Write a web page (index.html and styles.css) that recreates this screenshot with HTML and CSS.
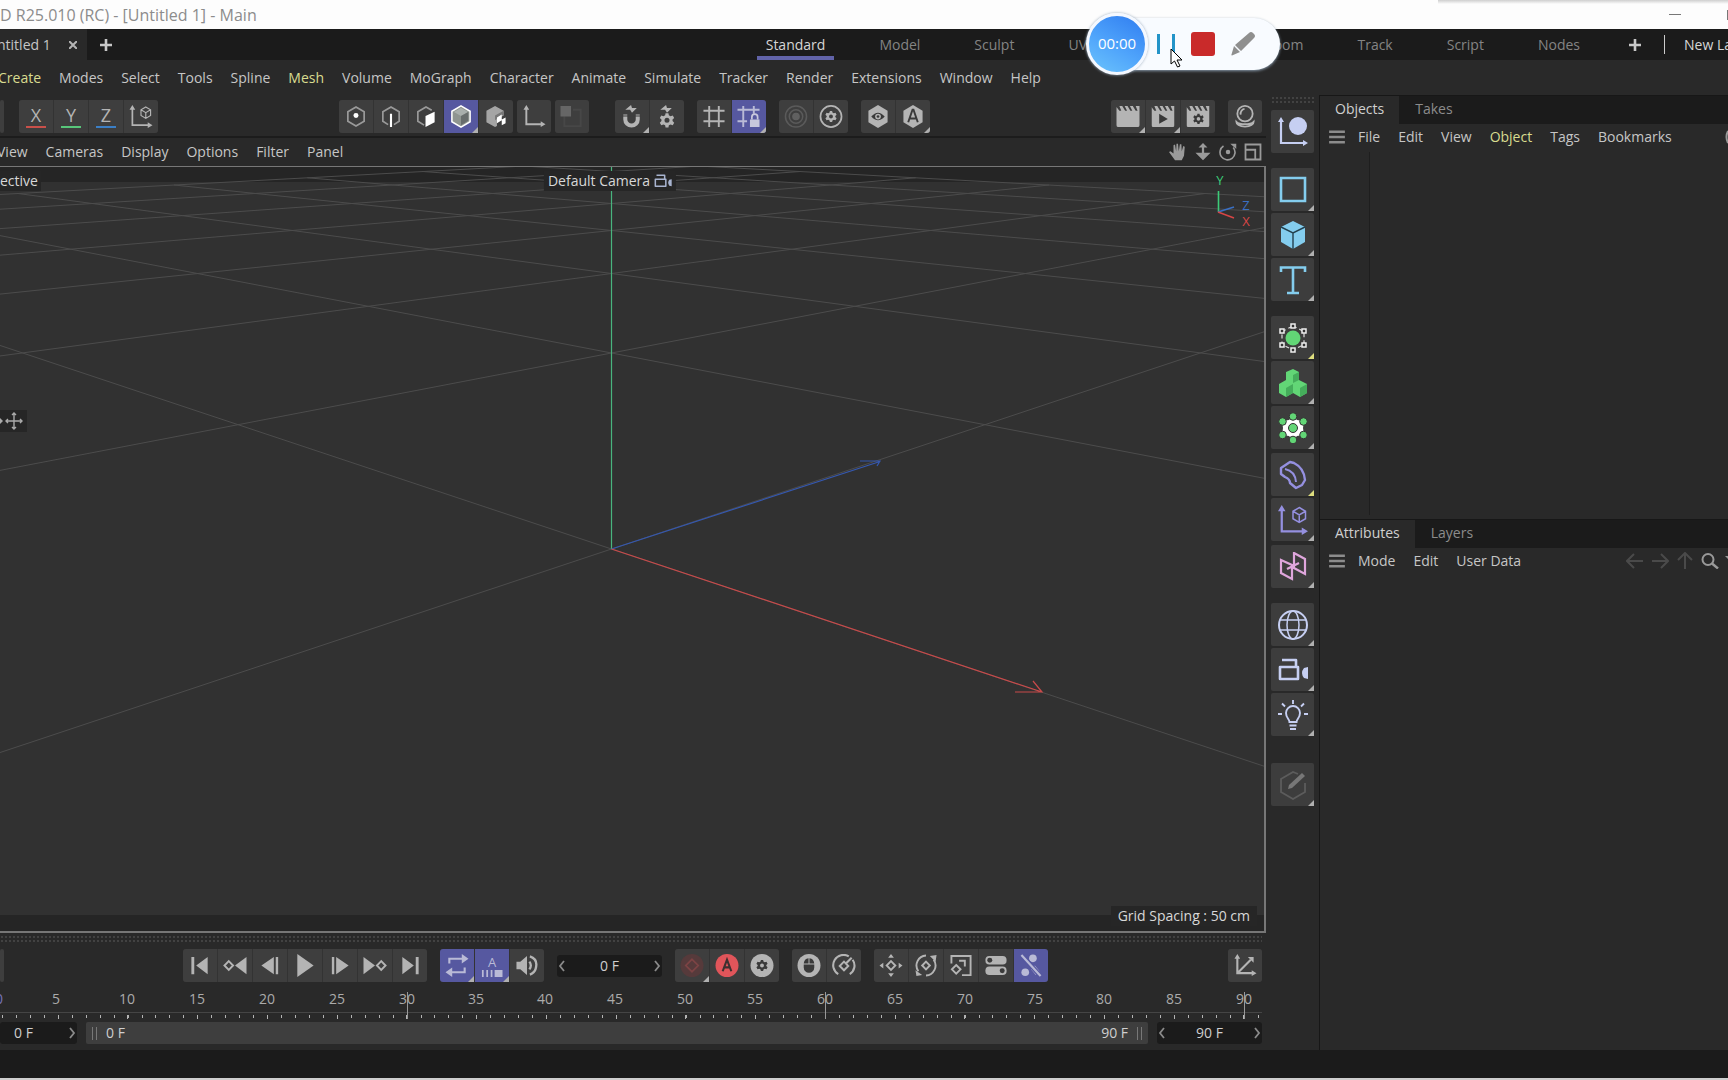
FILE: index.html
```html
<!DOCTYPE html>
<html lang="en">
<head>
<meta charset="utf-8">
<title>R25.010 (RC) - [Untitled 1] - Main</title>
<link rel="stylesheet" href="styles.css">
</head>
<body>
<svg class="defs" aria-hidden="true">
  <defs>
    <symbol id="axis" viewBox="0 0 24 24"><path d="M4 3v17h17" fill="none" stroke="currentColor" stroke-width="2"/><path d="M4 0l3 5H1zM24 20l-5 3v-6z" fill="currentColor"/></symbol>
    <symbol id="axis-cube" viewBox="0 0 24 24"><path d="M3 3v18h18" fill="none" stroke="currentColor" stroke-width="1.800"/><path d="M3 0l3 5H0zM24 21l-5 3v-6z" fill="currentColor"/><path d="M17 2l5 3v6l-5 3-5-3V5zM12 5l5 3 5-3M17 8v6" fill="none" stroke="currentColor" stroke-width="1.200"/></symbol>
    <symbol id="hex-dot" viewBox="0 0 24 24"><path d="M12 2l8.500 5v10L12 22l-8.500-5V7z" fill="none" stroke="#999" stroke-width="1.8"/><circle cx="12" cy="11" r="2.600" fill="#fff"/></symbol>
    <symbol id="hex-edge" viewBox="0 0 24 24"><path d="M9 20.500L3.500 17V7L12 2l8.500 5v10L15 20.500" fill="none" stroke="#999" stroke-width="1.8"/><path d="M12 9v14" stroke="#fff" stroke-width="2.200"/></symbol>
    <symbol id="hex-face" viewBox="0 0 24 24"><path d="M10 21l-6.500-4V7L12 2l6 3.500" fill="none" stroke="#999" stroke-width="1.8"/><path d="M11.500 11.500L21 7v11l-9.500 5z" fill="#fff"/></symbol>
    <symbol id="hex-model" viewBox="0 0 24 24"><path d="M12 1l9.500 5.500v11L12 23l-9.500-5.500v-11z" fill="#8f9590" stroke="#fff" stroke-width="1.600"/><path d="M12 3l7.500 4.200-7.500 4.300-7.500-4.300z" fill="#a9afac"/><path d="M12 11.500l7.500-4.300v9.300L12 21z" fill="#686d6c"/></symbol>
    <symbol id="hex-tex" viewBox="0 0 24 24"><path d="M11 1l9 5v5l-7 4v7l-2 1-9-5V6z" fill="#a5a5a5"/><path d="M11 11l9-5v4l-9 6z" fill="#777"/><path d="M13 13l5-3v5l4-2v6l-4 2v-5l-5 3z" fill="#fff"/></symbol>
    <symbol id="plane" viewBox="0 0 24 24"><path d="M4 9v13h17V5h-8" fill="none" stroke="#474747" stroke-width="2"/><path d="M0 1h11v11H0z" fill="#666"/></symbol>
    <symbol id="magnet" viewBox="0 0 24 24"><path d="M5 10v5a6.500 6.500 0 0013 0v-5" fill="none" stroke="currentColor" stroke-width="4.200"/><path d="M2 11.500h8M13 11.500h8" stroke="#3d3d3d" stroke-width="1.200"/><path d="M11 0L5 5h5l2 3 5-5h-5z" fill="currentColor"/></symbol>
    <symbol id="gear" viewBox="0 0 24 24"><path fill="currentColor" fill-rule="evenodd" d="M10 2h4l.600 3 2.300 1.300L20 5.200l2 3.500L19.700 11v2l2.300 2.300-2 3.500-3.100-1.100-2.300 1.300-.600 3h-4l-.600-3-2.300-1.300L4 18.800l-2-3.500L4.300 13v-2L2 8.700l2-3.500 3.100 1.100L9.400 5zM12 8.500a3.500 3.500 0 100 7 3.500 3.500 0 000-7z"/></symbol>
    <symbol id="snap-gear" viewBox="0 0 24 24"><path d="M11 0L5 5h5l2 3 5-5h-5z" fill="currentColor"/><use href="#gear" x="3" y="7" width="18" height="18"/></symbol>
    <symbol id="grid" viewBox="0 0 24 24"><path d="M7 1v22M17 1v22M1 6h22M1 17h22" fill="none" stroke="currentColor" stroke-width="2"/></symbol>
    <symbol id="grid-lock" viewBox="0 0 24 24"><path d="M6 1v22M17 1v8M0 5h23M0 17h10" fill="none" stroke="currentColor" stroke-width="2"/><path d="M13 15h10v8H13z" fill="#c8c8dc"/><path d="M15 15v-2.500a3 3 0 016 0V15" fill="none" stroke="#c8c8dc" stroke-width="1.800"/></symbol>
    <symbol id="rings" viewBox="0 0 24 24"><g fill="none" stroke="#5a5a5a" stroke-width="1.600"><circle cx="12" cy="12" r="11"/><circle cx="12" cy="12" r="7"/></g><circle cx="12" cy="12" r="4" fill="#606060"/></symbol>
    <symbol id="ring-gear" viewBox="0 0 24 24"><circle cx="12" cy="12" r="11" fill="none" stroke="currentColor" stroke-width="1.800"/><use href="#gear" x="5" y="5" width="14" height="14"/></symbol>
    <symbol id="hex-eye" viewBox="0 0 24 24"><path d="M12 0l10 6v12l-10 6-10-6V6z" fill="currentColor"/><path d="M5 12q7-8 14 0q-7 8-14 0z" fill="#3a3a3a"/><circle cx="12" cy="12" r="3" fill="currentColor"/><circle cx="12" cy="12" r="1.400" fill="#3a3a3a"/></symbol>
    <symbol id="hex-a" viewBox="0 0 24 24"><path d="M12 0l10 6v12l-10 6-10-6V6z" fill="currentColor"/><path d="M7 18l4.500-13h1L17 18M8.500 14h7" fill="none" stroke="#3a3a3a" stroke-width="2"/></symbol>
    <symbol id="clap" viewBox="0 0 24 24"><path d="M0 2l3 4h2L3 1h3l3 5h2L8.500 1h3l3 5h2L14 1h3l3 5h2l-2-5h4v20a2 2 0 01-2 2H2a2 2 0 01-2-2z" fill="currentColor"/></symbol>
    <symbol id="clap-play" viewBox="0 0 24 24"><use href="#clap" width="24" height="24"/><path d="M8 9l9 5.500-9 5z" fill="#383838"/></symbol>
    <symbol id="clap-gear" viewBox="0 0 24 24"><use href="#clap" width="24" height="24"/><use href="#gear" x="6" y="8" width="13" height="13" color="#383838"/></symbol>
    <symbol id="ball" viewBox="0 0 24 24"><g fill="none" stroke="currentColor" stroke-width="1.900"><circle cx="12" cy="9" r="8"/><path d="M7.500 10a5 5 0 014-6"/><path d="M3 17.500c0 2.500 3 5 9 5s9-2.500 9-5c-2 2-5 2.500-9 2.500s-7-.500-9-2.500z"/></g></symbol>
    <symbol id="hand" viewBox="0 0 24 24"><path d="M8 23L0 12l2-1 4 3V3l2-1 1.500 9L10 1h2l1 10 1.500-9.500h2L17 11l2-7 2 1-1 12-3 6z" fill="currentColor"/></symbol>
    <symbol id="dolly" viewBox="0 0 24 24"><path d="M12 0l6 6h-4.500v7H22L12 23 2 13h8.500V6H6z" fill="currentColor"/></symbol>
    <symbol id="orbit" viewBox="0 0 24 24"><path d="M6 4a10 10 0 1013 2" fill="none" stroke="currentColor" stroke-width="2.200"/><path d="M15 1h8v7z" fill="currentColor"/><circle cx="12" cy="12" r="3" fill="currentColor"/></symbol>
    <symbol id="maxi" viewBox="0 0 24 24"><path d="M2 2h20v20H2zM2 9h13v13" fill="none" stroke="currentColor" stroke-width="2.400"/></symbol>
    <symbol id="camera" viewBox="0 0 30 24"><path d="M4 2h14v6M2 9h18v12H2z" fill="none" stroke="currentColor" stroke-width="2.600" stroke-linejoin="round"/><path d="M30 9v12l-4-1q-4-5 0-10z" fill="currentColor"/></symbol>
    <symbol id="sphere-axis" viewBox="0 0 30 30"><path d="M3 4v22h23" fill="none" stroke="currentColor" stroke-width="2.200"/><path d="M3 0l3 5H0zM30 26l-5 3v-6z" fill="currentColor"/><circle cx="20" cy="9" r="9" fill="currentColor"/></symbol>
    <symbol id="rect" viewBox="0 0 30 30"><path d="M3 3h24v23H3z" fill="none" stroke="currentColor" stroke-width="2.600"/></symbol>
    <symbol id="cube" viewBox="0 0 30 30"><path d="M15 1l12 6v15l-12 7-12-7V7z" fill="currentColor"/><path d="M3 7l12 6 12-6M15 13v16" fill="none" stroke="#23414f" stroke-width="1.400"/></symbol>
    <symbol id="text-t" viewBox="0 0 30 30"><path d="M3 7V2.500h24V7M15 2.500v25M9 28h12" fill="none" stroke="currentColor" stroke-width="2.600"/></symbol>
    <symbol id="subdiv" viewBox="0 0 30 30"><path d="M15 3l11 5.500v13L15 27 4 21.500v-13z" fill="none" stroke="#ddd" stroke-width="1.200" stroke-dasharray="4 3"/><circle cx="15" cy="15" r="7.500" fill="currentColor"/><g fill="#333" stroke="#eee" stroke-width="1.500"><path d="M13 1h4v4h-4zM13 25h4v4h-4zM2 6h4v4H2zM24 6h4v4h-4zM2 20h4v4H2zM24 20h4v4h-4z"/></g></symbol>
    <symbol id="cloner" viewBox="0 0 30 30"><path d="M15 1l6 3v8l8 4v9l-7 4-7-4-7 4-7-4v-9l7-4V4z" fill="currentColor"/><path d="M15 7l6-3v8l-6 3zM8 20l7-4v9l-7 4zM22 20l7-4v9l-7 4z" fill="#45ad5b"/></symbol>
    <symbol id="effector" viewBox="0 0 30 30"><path d="M15 3l4 4 7 1-1 7 1 7-7 1-4 4-4-4-7-1 1-7-1-7 7-1z" fill="#fff"/><g fill="currentColor" stroke="#333"><circle cx="15" cy="3.500" r="3.800"/><circle cx="15" cy="27" r="3.800"/><circle cx="4.500" cy="8.500" r="3.800"/><circle cx="25.500" cy="8.500" r="3.800"/><circle cx="4.500" cy="22" r="3.800"/><circle cx="25.500" cy="22" r="3.800"/><circle cx="15" cy="15" r="4.500"/></g></symbol>
    <symbol id="deform" viewBox="0 0 30 30"><path d="M3 8L12 2l4 1q10 5 11 17l-3 5-6 3-6-5q0-4-5-6l-4-3z" fill="none" stroke="currentColor" stroke-width="2.400" stroke-linejoin="round"/><path d="M7 9q10 2 11 13" fill="none" stroke="currentColor" stroke-width="2"/></symbol>
    <symbol id="sym" viewBox="0 0 30 30"><path d="M3 8l11 5v14L3 21zM16 1l11 6v15l-11-6zM9 17l12-6" fill="none" stroke="currentColor" stroke-width="2.200"/></symbol>
    <symbol id="globe" viewBox="0 0 30 30"><g fill="none" stroke="currentColor" stroke-width="2"><circle cx="15" cy="15" r="14"/><ellipse cx="15" cy="15" rx="6" ry="14" stroke-width="1.500"/><path d="M2 10h26M2 20h26" stroke-width="1.500"/></g></symbol>
    <symbol id="bulb" viewBox="0 0 30 30"><path d="M11.500 22c0-3-3.500-4-3.500-9a7 7 0 0114 0c0 5-3.500 6-3.500 9zM11.500 25.500h7M12 29h6M15 0v4M0 14h4M26 14h4M4 3.500l3 3M26 3.500l-3 3" fill="none" stroke="currentColor" stroke-width="1.900"/></symbol>
    <symbol id="edit-hex" viewBox="0 0 30 30"><path d="M20 4l-5-2L3 9v13l12 7 12-7v-9" fill="none" stroke="currentColor" stroke-width="1.800"/><path d="M10 19l1-4L24 3l3 3-13 12z" fill="#777"/></symbol>
    <symbol id="p-start" viewBox="0 0 24 24"><path d="M3 3h3v18H3zM20 3v18L8 12z" fill="currentColor"/></symbol>
    <symbol id="p-prevkey" viewBox="0 0 24 24"><path d="M24 3v18L12 12z" fill="currentColor"/><path d="M5.500 7.500L10 12l-4.500 4.500L1 12z" fill="none" stroke="currentColor" stroke-width="2"/></symbol>
    <symbol id="p-prev" viewBox="0 0 24 24"><path d="M16 3v18L3 12zM18 3h2.500v18H18z" fill="currentColor"/></symbol>
    <symbol id="p-play" viewBox="0 0 24 24"><path d="M4 0l17 12L4 24z" fill="currentColor"/></symbol>
    <symbol id="loop" viewBox="0 0 24 24"><path d="M4 10V5h14M20 14v5H6" fill="none" stroke="currentColor" stroke-width="2.200"/><path d="M17 0l7 5-7 5zM7 14v10l-7-5z" fill="currentColor"/></symbol>
    <symbol id="speaker" viewBox="0 0 24 24"><path d="M1 8h4l7-6v20l-7-6H1z" fill="currentColor"/><path d="M14.500 8q3 4 0 8M15 2.500q9 3 6 13-1 4-6 6" fill="none" stroke="currentColor" stroke-width="2.400"/></symbol>
    <symbol id="rec" viewBox="0 0 24 24"><circle cx="12" cy="12" r="12" fill="#563a3b"/><path d="M12 5.500l6.500 6.500-6.500 6.500L5.500 12z" fill="none" stroke="#7c4344" stroke-width="1.800"/></symbol>
    <symbol id="autokey" viewBox="0 0 24 24"><circle cx="12" cy="12" r="12" fill="#e0555a"/><path d="M7.500 18L12 6l4.500 12M9 14h6" fill="none" stroke="#3c3030" stroke-width="2.200"/></symbol>
    <symbol id="disc-gear" viewBox="0 0 24 24"><circle cx="12" cy="12" r="12" fill="currentColor"/><use href="#gear" x="5" y="5" width="14" height="14" color="#3a3a3a"/></symbol>
    <symbol id="disc-mouse" viewBox="0 0 24 24"><circle cx="12" cy="12" r="12" fill="currentColor"/><path d="M6.500 11h11v3a5.500 5.500 0 01-11 0zM6.500 10q.500-5 5-5.500V10zM12.500 4.500q4.500.500 5 5.500h-5z" fill="#3a3a3a"/></symbol>
    <symbol id="gauge" viewBox="0 0 24 24"><path d="M6 21A10.500 10.500 0 0117 2.500M21 6a10.500 10.500 0 01-3 15M20 4l-6 6" fill="none" stroke="currentColor" stroke-width="2.200"/><path d="M12 8l4.500 4.500L12 17l-4.500-4.500z" fill="none" stroke="currentColor" stroke-width="2"/></symbol>
    <symbol id="k-move" viewBox="0 0 24 24"><path d="M12 7.500l4.500 4.500-4.500 4.500L7.500 12z" fill="none" stroke="currentColor" stroke-width="2"/><path d="M12 0l3 4H9zM12 24l3-4H9zM0 12l4-3v6zM24 12l-4-3v6z" fill="currentColor"/></symbol>
    <symbol id="k-rot" viewBox="0 0 24 24"><path d="M12 8l4 4-4 4-4-4zM4 18A10.500 10.500 0 0112 1.500M20 6a10.500 10.500 0 01-8 16.500" fill="none" stroke="currentColor" stroke-width="2"/><path d="M16 2l7-1-1 7zM1 17l1 6 6-1z" fill="currentColor"/></symbol>
    <symbol id="k-scale" viewBox="0 0 24 24"><path d="M2 10V2h20v20h-9M7 11.500l4.500 4.500L7 20.500 2.500 16zM10 7h6v6" fill="none" stroke="currentColor" stroke-width="2"/></symbol>
    <symbol id="k-param" viewBox="0 0 24 24"><rect x="1" y="2" width="22" height="9" rx="4" fill="currentColor"/><rect x="1" y="13" width="22" height="9" rx="4" fill="currentColor"/><circle cx="5.500" cy="6.500" r="2.600" fill="#3a3a3a"/><circle cx="18.500" cy="17.500" r="2.600" fill="#3a3a3a"/></symbol>
    <symbol id="k-pla" viewBox="0 0 24 24"><circle cx="6" cy="19" r="4" fill="currentColor"/><circle cx="14" cy="4.500" r="4" fill="currentColor"/><path d="M16 12l5 6-4 4-5-6z" fill="currentColor"/><path d="M2 1l20 22" stroke="#5658a0" stroke-width="5"/><path d="M2 1l20 22" stroke="currentColor" stroke-width="2.200"/></symbol>
    <symbol id="tri-axis" viewBox="0 0 24 24"><path d="M4 3v17h17M4 20L18 6" fill="none" stroke="currentColor" stroke-width="2.200"/><path d="M4 0l3 5H1zM24 20l-5 3v-6zM21 3v6l-6-6z" fill="currentColor"/></symbol>
    <symbol id="burger" viewBox="0 0 18 16"><path d="M0 2h18M0 8h18M0 14h18" stroke="currentColor" stroke-width="2.600"/></symbol>
    <symbol id="plus" viewBox="0 0 12 12"><path d="M6 0v12M0 6h12" stroke="currentColor" stroke-width="2.600"/></symbol>
    <symbol id="arrow" viewBox="0 0 18 16"><path d="M17 8H2M8 1L1 8l7 7" fill="none" stroke="currentColor" stroke-width="2"/></symbol>
    <symbol id="chev" viewBox="0 0 8 12"><path d="M2 1l4 5-4 5" fill="none" stroke="currentColor" stroke-width="1.800"/></symbol>
  </defs>
</svg>

<header class="titlebar"><span class="title">D R25.010 (RC) - [Untitled 1] - Main</span><button class="minimize" aria-label="Minimize"></button><button class="maximize" aria-label="Maximize"></button></header>

<nav class="layouts">
  <div class="doc-tab"><span>ntitled 1</span><button class="close" aria-label="Close tab"><svg viewBox="0 0 8 8"><path d="M0 0l8 8M8 0L0 8" stroke="currentColor" stroke-width="2"/></svg></button></div>
  <button class="add" aria-label="New document"><svg><use href="#plus"/></svg></button>
  <div class="layout-tabs">
    <a href="#" class="active">Standard</a><a href="#">Model</a><a href="#">Sculpt</a><a href="#" class="uv">UV</a><a href="#">Paint</a><a href="#">Groom</a><a href="#">Track</a><a href="#">Script</a><a href="#">Nodes</a>
  </div>
  <button class="add" aria-label="Add layout"><svg><use href="#plus"/></svg></button>
  <span class="new-layout">New La</span>
</nav>

<nav class="menu main-menu">
  <a href="#" class="hot">Create</a><a href="#">Modes</a><a href="#">Select</a><a href="#">Tools</a><a href="#">Spline</a><a href="#" class="hot">Mesh</a><a href="#">Volume</a><a href="#">MoGraph</a><a href="#">Character</a><a href="#">Animate</a><a href="#">Simulate</a><a href="#">Tracker</a><a href="#">Render</a><a href="#">Extensions</a><a href="#">Window</a><a href="#">Help</a>
</nav>

<main class="workspace">
  <section class="stage">
    <div class="toolbar">
      <div class="group stub"></div>
      <div class="group axes">
        <button class="ax ax-x">X</button><button class="ax ax-y">Y</button><button class="ax ax-z">Z</button><button aria-label="Coordinate system"><svg><use href="#axis-cube"/></svg></button>
      </div>
      <div class="group modes">
        <button aria-label="Points"><svg><use href="#hex-dot"/></svg></button><button aria-label="Edges"><svg><use href="#hex-edge"/></svg></button><button aria-label="Polygons"><svg><use href="#hex-face"/></svg></button><button class="on more" aria-label="Model"><svg><use href="#hex-model"/></svg></button><button aria-label="Texture"><svg><use href="#hex-tex"/></svg></button>
      </div>
      <div class="group near"><button aria-label="Enable axis"><svg><use href="#axis"/></svg></button></div>
      <div class="group near"><button aria-label="Workplane"><svg><use href="#plane"/></svg></button></div>
      <div class="group far"><button class="more" aria-label="Snap"><svg><use href="#magnet"/></svg></button><button aria-label="Snap settings"><svg><use href="#snap-gear"/></svg></button></div>
      <div class="group"><button aria-label="Grid"><svg><use href="#grid"/></svg></button><button class="on more" aria-label="Lock grid"><svg><use href="#grid-lock"/></svg></button></div>
      <div class="group"><button aria-label="Soft selection"><svg><use href="#rings"/></svg></button><button aria-label="Selection settings"><svg><use href="#ring-gear"/></svg></button></div>
      <div class="group"><button aria-label="Visibility"><svg><use href="#hex-eye"/></svg></button><button class="more" aria-label="Auto mode"><svg><use href="#hex-a"/></svg></button></div>
      <div class="group end"><button class="more" aria-label="Render view"><svg><use href="#clap"/></svg></button><button class="more" aria-label="Render"><svg><use href="#clap-play"/></svg></button><button aria-label="Render settings"><svg><use href="#clap-gear"/></svg></button></div>
      <div class="group"><button aria-label="Material"><svg><use href="#ball"/></svg></button></div>
    </div>

    <div class="view-bar">
      <nav class="menu"><a href="#">View</a><a href="#">Cameras</a><a href="#">Display</a><a href="#">Options</a><a href="#">Filter</a><a href="#">Panel</a></nav>
      <div class="view-tools">
        <button aria-label="Pan"><svg><use href="#hand"/></svg></button><button aria-label="Dolly"><svg><use href="#dolly"/></svg></button><button aria-label="Orbit"><svg><use href="#orbit"/></svg></button><button aria-label="Toggle view"><svg><use href="#maxi"/></svg></button>
      </div>
    </div>

    <div class="viewport">
      <svg class="scene" viewBox="0 167 1264 764" preserveAspectRatio="xMidYMid slice">
        <path d="M-400 0H1700V182H-400zM-400 915H1700V1100H-400z" fill="#252525"/>
        <g id="rays" fill="none" stroke="#4c4c4c" stroke-width="1">
          <path d="M-50 769.200L1273 328.800M-50 480L1273 226M-50 362.700L1205 193.500M-50 299.300L1049 185M-50 259.400L915.700 177.800M-50 232.200L800.500 171.500M-50 212.300L700 166M-50 197.200L611.500 161.300"/>
        </g>
        <use href="#rays" transform="matrix(-1 0 0 1 1223 0)"/>
        <path d="M611.500 549V160" stroke="#48b47e" stroke-width="1.200"/>
        <path d="M611.500 549L880 461.500M860 461H880L877 466" fill="none" stroke="#3558b0" stroke-width="1.200"/>
        <path d="M611.500 549L1042 692M1015 692H1042L1033 681" fill="none" stroke="#c84a4a" stroke-width="1.200"/>
        <path d="M1218.500 191v21" stroke="#3ccb78" stroke-width="1.600"/>
        <path d="M1218 212l16-5" stroke="#3a70c4" stroke-width="1.600"/>
        <path d="M1218 212l16 6" stroke="#d84646" stroke-width="1.400"/>
        <g class="gizmo"><text x="1220" y="185" fill="#3ccb78">Y</text><text x="1246" y="210" fill="#3a70c4">Z</text><text x="1246" y="226" fill="#d84646">X</text></g>
      </svg>
      <span class="hud hud-name">ective</span>
      <span class="hud hud-camera">Default Camera <svg><use href="#camera"/></svg></span>
      <span class="hud hud-tool"><svg viewBox="0 0 24 18"><path d="M0 6l3 3-3 3z" fill="currentColor"/><path d="M14 1v16M6 9h16M12 3l2-2 2 2M12 15l2 2 2-2M8 7L6 9l2 2M20 7l2 2-2 2" fill="none" stroke="currentColor" stroke-width="1.400"/></svg></span>
      <span class="hud hud-grid">Grid Spacing : 50 cm</span>
    </div>

    <div class="grip"></div>

    <div class="transport">
      <div class="group stub"></div>
      <div class="group play">
        <button aria-label="Go to start"><svg><use href="#p-start"/></svg></button><button aria-label="Previous key"><svg><use href="#p-prevkey"/></svg></button><button aria-label="Previous frame"><svg><use href="#p-prev"/></svg></button><button aria-label="Play"><svg><use href="#p-play"/></svg></button><button aria-label="Next frame"><svg class="flip"><use href="#p-prev"/></svg></button><button aria-label="Next key"><svg class="flip"><use href="#p-prevkey"/></svg></button><button aria-label="Go to end"><svg class="flip"><use href="#p-start"/></svg></button>
      </div>
      <div class="group"><button class="on more" aria-label="Loop"><svg><use href="#loop"/></svg></button><button class="on more rate"><span>A</span><svg viewBox="0 0 24 8"><path d="M1.500 0v8M6.500 0v8M11.500 0v8" stroke="currentColor" stroke-width="2"/><path d="M15 0h9v8h-9z" fill="currentColor"/></svg></button><button aria-label="Sound"><svg><use href="#speaker"/></svg></button></div>
      <div class="field"><svg class="flip"><use href="#chev"/></svg><input aria-label="Current frame" value="0 F"><svg><use href="#chev"/></svg></div>
      <div class="group"><button class="more" aria-label="Record"><svg><use href="#rec"/></svg></button><button aria-label="Autokey"><svg><use href="#autokey"/></svg></button><button aria-label="Key settings"><svg><use href="#disc-gear"/></svg></button></div>
      <div class="group"><button aria-label="Motion record"><svg><use href="#disc-mouse"/></svg></button><button aria-label="Motion speed"><svg><use href="#gauge"/></svg></button></div>
      <div class="group"><button aria-label="Position keys"><svg><use href="#k-move"/></svg></button><button aria-label="Rotation keys"><svg><use href="#k-rot"/></svg></button><button aria-label="Scale keys"><svg><use href="#k-scale"/></svg></button><button aria-label="Parameter keys"><svg><use href="#k-param"/></svg></button><button class="on" aria-label="Point level animation"><svg><use href="#k-pla"/></svg></button></div>
      <div class="group end"><button aria-label="Timeline"><svg><use href="#tri-axis"/></svg></button></div>
    </div>

    <svg class="ruler" viewBox="0 984 1266 36" preserveAspectRatio="none">
      <path d="M0 1012.500H1262" stroke="#454545"/>
      <g stroke="#b4b4b4" shape-rendering="crispEdges">
        <path d="M2 1016.500H1262" stroke-width="3" stroke-dasharray="1 12.950"/>
        <path d="M57.500 1017H1262" stroke-width="4" stroke-dasharray="1 68.750"/>
        <path d="M407.500 992v27M825.500 992v27M1244.500 992v27" stroke="#999"/>
      </g>
      <g class="ticks">
        <text x="-1" y="1004" fill="#7673b8">0</text><text x="56" y="1004">5</text><text x="127" y="1004">10</text><text x="197" y="1004">15</text><text x="267" y="1004">20</text><text x="337" y="1004">25</text><text x="407" y="1004">30</text><text x="476" y="1004">35</text><text x="545" y="1004">40</text><text x="615" y="1004">45</text><text x="685" y="1004">50</text><text x="755" y="1004">55</text><text x="825" y="1004">60</text><text x="895" y="1004">65</text><text x="965" y="1004">70</text><text x="1035" y="1004">75</text><text x="1104" y="1004">80</text><text x="1174" y="1004">85</text><text x="1244" y="1004">90</text>
      </g>
    </svg>

    <div class="range-row">
      <div class="field field-start"><input aria-label="Start frame" value="0 F"><svg><use href="#chev"/></svg></div>
      <div class="range"><i></i><span>0 F</span><span class="last">90 F</span><i></i></div>
      <div class="field"><svg class="flip"><use href="#chev"/></svg><input aria-label="End frame" value="90 F"><svg><use href="#chev"/></svg></div>
    </div>
  </section>

  <aside class="palette">
    <div class="grip"></div>
    <div class="stack"><button class="c-pale" aria-label="Null"><svg><use href="#sphere-axis"/></svg></button></div>
    <div class="stack c-sky"><button class="more" aria-label="Spline"><svg><use href="#rect"/></svg></button><button class="more" aria-label="Cube"><svg><use href="#cube"/></svg></button><button class="more" aria-label="Text"><svg><use href="#text-t"/></svg></button></div>
    <div class="stack c-green"><button class="more gold" aria-label="Subdivision"><svg><use href="#subdiv"/></svg></button><button class="more" aria-label="Cloner"><svg><use href="#cloner"/></svg></button><button class="more" aria-label="Effector"><svg><use href="#effector"/></svg></button></div>
    <div class="stack close-up c-violet"><button class="more gold" aria-label="Deformer"><svg><use href="#deform"/></svg></button><button class="more" aria-label="Field"><svg><use href="#axis-cube"/></svg></button></div>
    <div class="stack close-up c-pink"><button class="more" aria-label="Symmetry"><svg><use href="#sym"/></svg></button></div>
    <div class="stack c-pale"><button class="more" aria-label="Sky"><svg><use href="#globe"/></svg></button><button class="more" aria-label="Camera"><svg><use href="#camera"/></svg></button><button class="more" aria-label="Light"><svg><use href="#bulb"/></svg></button></div>
    <div class="stack apart c-dim"><button class="more" aria-label="Make editable"><svg><use href="#edit-hex"/></svg></button></div>
  </aside>

  <aside class="managers">
    <section class="manager objects">
      <div class="tabs"><a href="#" class="active">Objects</a><a href="#">Takes</a></div>
      <nav class="menu"><svg class="burger"><use href="#burger"/></svg><a href="#">File</a><a href="#">Edit</a><a href="#">View</a><a href="#" class="hot">Object</a><a href="#">Tags</a><a href="#">Bookmarks</a><svg class="edge" viewBox="0 0 3 14"><path d="M3 1Q0 7 3 13" fill="none" stroke="currentColor" stroke-width="2"/></svg></nav>
      <div class="tree"></div>
    </section>
    <section class="manager">
      <div class="tabs"><a href="#" class="active">Attributes</a><a href="#">Layers</a></div>
      <nav class="menu"><svg class="burger"><use href="#burger"/></svg><a href="#">Mode</a><a href="#">Edit</a><a href="#">User Data</a>
        <span class="history"><svg><use href="#arrow"/></svg><svg class="flip"><use href="#arrow"/></svg><svg class="up"><use href="#arrow"/></svg><svg class="search" viewBox="0 0 18 16"><circle cx="7" cy="6.500" r="5.500" fill="none" stroke="currentColor" stroke-width="2"/><path d="M11 10.500l6 5" stroke="currentColor" stroke-width="2.400"/></svg></span><svg class="edge" viewBox="0 0 3 14"><path d="M0 2h3v3z" fill="currentColor"/></svg></nav>
    </section>
  </aside>
</main>

<footer class="status"></footer>

<div class="recorder">
  <span class="time">00:00</span>
  <button aria-label="Pause" class="pause"></button>
  <button aria-label="Stop" class="stop"></button>
  <button aria-label="Draw" class="draw"><svg viewBox="0 0 24 24"><path d="M18 1q2-2 4 0l1 1q2 2 0 4L10 19l-6-6zM3 14l6 6-8 3.500q-1 0-.500-1z" fill="#8f8f8f"/></svg></button>
  <svg class="cursor" viewBox="0 0 13 20"><path d="M1 1v15l3.500-3 3 6 2.500-1-3-6h5z" fill="#fff" stroke="#000"/></svg>
</div>
</body>
</html>
```
FILE: styles.css
```css
* { box-sizing: border-box; }
body {
  margin: 0;
  min-height: 100vh;
  display: flex;
  flex-direction: column;
  position: relative;
  overflow: hidden;
  background: #292929;
  color: #c6c6c6;
  font: 14px/20px "Open Sans", "Noto Sans", sans-serif;
}
a { color: inherit; text-decoration: none; }
button {
  padding: 0;
  border: 0;
  background: none;
  color: #b4b4b4;
  font: inherit;
  display: flex;
  align-items: center;
  justify-content: center;
}
svg { display: block; }
.defs { position: absolute; width: 0; height: 0; }
.flip { transform: scaleX(-1); }

.titlebar {
  height: 29px;
  background: linear-gradient(#cfcfcf, #fdfdfd) right top / 290px 4px no-repeat #fdfdfd;
  color: #8c8c8c;
  font-size: 16px;
  display: flex;
  align-items: center;
  white-space: nowrap;
}
.minimize { width: 12px; height: 1px; margin-left: auto; margin-right: 46px; background: #777; }
.maximize { width: 1px; height: 10px; background: #777; }

.layouts { height: 31px; background: #1b1b1b; display: flex; align-items: stretch; white-space: nowrap; }
.doc-tab { width: 87px; background: #292929; display: flex; align-items: center; justify-content: space-between; padding-right: 10px; }
.doc-tab span { margin-left: -3px; }
.close svg { width: 8px; height: 8px; }
.add { width: 38px; color: #c8c8c8; }
.add svg { width: 12px; height: 12px; }
.layout-tabs { margin-left: auto; display: flex; gap: 36px; color: #848484; margin-right: 27px; }
.layout-tabs a { padding: 6px 9px 0; line-height: 20px; border-bottom: 4px solid transparent; }
.layout-tabs .active { color: #d6d6d6; border-color: #6163a8; }
.layout-tabs .uv { width: 66px; }
.new-layout { width: 64px; margin: 6px 0 6px 10px; padding-left: 19px; border-left: 1px solid #ccc; line-height: 19px; overflow: hidden; color: #d6d6d6; }

.menu { display: flex; align-items: center; gap: 18px; white-space: nowrap; }
.hot { color: #d9dc90; }
.main-menu { height: 35px; margin-left: -2px; }

.workspace { flex: 1; display: grid; grid-template-columns: minmax(0, 1fr) 53px 409px; }
.stage { display: flex; flex-direction: column; min-width: 0; }

.toolbar, .transport { display: flex; gap: 13px; padding-right: 4px; }
.toolbar { padding-top: 5px; padding-bottom: 3px; border-bottom: 2px solid #1c1c1c; }
.group { display: flex; gap: 1px; background: #333; border-radius: 3px; overflow: hidden; }
.group button { width: 34px; height: 33px; background: #3e3e3e; position: relative; }
.group svg { width: 24px; height: 23px; }
.group .on { background: #5658a0; color: #b9bad6; }
.stub { width: 4px; background: #3e3e3e; }
.axes { margin-left: 2px; }
.modes { margin-left: 168px; }
.near { margin-left: -9px; }
.far { margin-left: 13px; }
.end { margin-left: auto; }
.play { margin-left: 166px; }
.more { position: relative; }
.more::after {
  content: "";
  position: absolute;
  right: 0;
  bottom: 0;
  border: solid transparent;
  border-width: 0 0 6px 6px;
  border-bottom-color: #b0b0b0;
}
.gold::after { border-bottom-color: #dedd7e; }
.group .ax { flex-direction: column; font-size: 18px; line-height: 20px; }
.ax::after { content: ""; width: 20px; height: 2px; margin-top: 1px; }
.ax-x::after { background: #c9504a; }
.ax-y::after { background: #58c67a; }
.ax-z::after { background: #3b7fc6; }
.group .rate { flex-direction: column; gap: 1px; font-size: 13px; line-height: 14px; }
.group .rate svg { height: 7px; }

.view-bar { height: 28px; display: flex; align-items: center; justify-content: space-between; padding-right: 4px; }
.view-bar .menu { margin-left: -3px; }
.view-tools { display: flex; gap: 7px; }
.view-tools button { color: #9a9a9a; }
.view-tools svg { width: 18px; height: 18px; }

.viewport { flex: 1; min-height: 300px; position: relative; overflow: hidden; background: #313131; border: solid #777; border-width: 1px 2px 2px 0; }
.scene { position: absolute; width: 100%; height: 100%; }
.gizmo { font-size: 13px; text-anchor: middle; }
.hud { position: absolute; display: flex; align-items: center; gap: 4px; background: #262626; color: #d8d8d8; line-height: 20px; white-space: nowrap; }
.hud-name { left: 0; top: 4px; padding-right: 3px; }
.hud-camera { left: 50%; top: 4px; padding: 0 4px; transform: translateX(-22px) translateX(-50%); }
.hud-camera svg { width: 18px; height: 14px; color: #a8b4d0; }
.hud-tool { left: 0; top: 243px; width: 27px; height: 22px; }
.hud-tool svg { width: 24px; height: 18px; color: #aaa; }
.hud-grid { right: 7px; bottom: 5px; padding: 0 7px; }

.grip { height: 8px; background: radial-gradient(#424242 1px, transparent 1px) 0 0 / 4px 4px; }
.stage .grip { margin: 2px 4px 6px 0; }

.ruler { width: 100%; height: 36px; margin: 2px 0; }
.ticks { font-size: 14px; text-anchor: middle; fill: #ababab; }

.field { display: flex; align-items: center; align-self: center; width: 105px; height: 22px; padding: 0 1px; background: #1b1b1b; border-radius: 3px; }
.field svg { flex: none; width: 8px; height: 12px; color: #8a8a8a; }
.field input { flex: 1; width: 0; min-width: 0; padding: 0; border: 0; background: none; color: #cfcfcf; font: inherit; text-align: center; }
.range-row { display: flex; align-items: center; gap: 9px; padding-right: 4px; margin-bottom: 6px; }
.field-start { width: 77px; }
.field-start input { padding-right: 22px; }
.range { flex: 1; height: 22px; padding: 0 6px; display: flex; align-items: center; gap: 9px; background: #3e3e3e; color: #cfcfcf; border-radius: 2px; }
.range i { width: 5px; height: 13px; border: solid #777; border-width: 0 1px; }
.last { margin-left: auto; }

.palette { padding: 1px 5px 0; display: flex; flex-direction: column; gap: 15px; }
.palette .grip { margin-bottom: -9px; }
.stack { display: flex; flex-direction: column; gap: 2px; }
.stack button { width: 43px; height: 43px; background: #3d3d3d; color: inherit; border-radius: 2px; }
.stack svg { width: 30px; height: 30px; }
.close-up { margin-top: -11px; }
.apart { margin-top: 12px; }
.c-pale, .stack .c-pale { color: #c6cff2; }
.c-sky { color: #84cdee; }
.c-green { color: #62d676; }
.c-violet { color: #9590e0; }
.c-pink { color: #dfa6dc; }
.c-dim { color: #5c5c5c; }

.managers { display: flex; flex-direction: column; border-left: 1px solid #171717; min-width: 0; overflow: hidden; }
.manager { border-top: 1px solid #171717; }
.objects { height: 424px; display: flex; flex-direction: column; }
.tabs { display: flex; height: 28px; background: #1b1b1b; color: #8c8c8c; }
.tabs a { padding: 0 16px; line-height: 26px; }
.tabs .active { background: #292929; color: #d0d0d0; padding: 0 15px; }
.manager .menu { height: 26px; padding-left: 8px; }
.burger { width: 18px; height: 14px; color: #8c8c8c; margin-right: -6px; }
.tree { flex: 1; margin: 2px 0 4px 49px; border-left: 1px solid #1e1e1e; }
.edge { width: 3px; height: 14px; margin-left: auto; color: #999; }
.history { display: flex; gap: 7px; margin-left: auto; margin-right: -12px; color: #4a4a4a; }
.history + .edge { margin-left: 0; }
.history svg { width: 18px; height: 16px; }
.up { transform: rotate(90deg); }
.history .search { color: #999; }

.status { height: 30px; background: #1b1b1b; border-bottom: 2px solid #cfcfcf; }

.recorder {
  position: absolute;
  left: 1087px;
  top: 18px;
  width: 193px;
  height: 52px;
  border-radius: 26px;
  background: #f8fbff;
  box-shadow: 0 1px 3px #8899aa;
  display: flex;
  align-items: center;
}
.time {
  flex: none;
  width: 62px;
  height: 62px;
  margin-left: -1px;
  border: 3px solid #f4f8ff;
  border-radius: 50%;
  background: linear-gradient(210deg, #2f7cf0, #4fa4fb 55%, #6cc4fb);
  color: #fff;
  font-size: 15px;
  line-height: 54px;
  text-align: center;
  box-shadow: 0 0 3px #99aabb;
}
.pause { width: 18px; height: 20px; margin-left: 9px; border: solid #2494c8; border-width: 0 3px; }
.stop { width: 24px; height: 24px; margin-left: 16px; border-radius: 3px; background: #c92a2a; }
.draw { margin-left: 16px; }
.draw svg { width: 24px; height: 24px; }
.cursor { position: absolute; left: 83px; top: 30px; width: 13px; height: 20px; }
```
